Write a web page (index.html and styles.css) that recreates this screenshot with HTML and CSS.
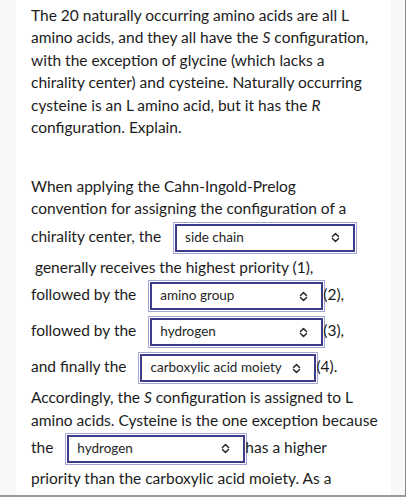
FILE: index.html
```html
<!DOCTYPE html>
<html lang="en">
<head>
<meta charset="utf-8">
<title>Amino acid configuration</title>
<link rel="stylesheet" href="styles.css">
</head>
<body>
<div class="frame">
  <main class="card">
    <p class="question">The 20 naturally occurring amino acids are all L amino acids, and they all have the <i>S</i> configuration, with the exception of glycine (which lacks a chirality center) and cysteine. Naturally occurring cysteine is an L amino acid, but it has the <i>R</i> configuration. Explain.</p>
    <p class="answer">When applying the Cahn-Ingold-Prelog<br>convention for assigning the configuration of a chirality center, the <span class="sel sel-wide"><span class="sel-text">side chain</span><svg class="chev" width="9" height="11" viewBox="0 0 9 11"><path d="M1.5 4.5 L4.5 1.5 L7.5 4.5 M1.5 6.5 L4.5 9.5 L7.5 6.5"/></svg></span><br>&nbsp;generally receives the highest priority (1),<br>followed by the <span class="sel"><span class="sel-text">amino group</span><svg class="chev" width="9" height="11" viewBox="0 0 9 11"><path d="M1.5 4.5 L4.5 1.5 L7.5 4.5 M1.5 6.5 L4.5 9.5 L7.5 6.5"/></svg></span>(2),<br>followed by the <span class="sel"><span class="sel-text">hydrogen</span><svg class="chev" width="9" height="11" viewBox="0 0 9 11"><path d="M1.5 4.5 L4.5 1.5 L7.5 4.5 M1.5 6.5 L4.5 9.5 L7.5 6.5"/></svg></span>(3),<br>and finally the <span class="sel sel-mid"><span class="sel-text">carboxylic acid moiety</span><svg class="chev" width="9" height="11" viewBox="0 0 9 11"><path d="M1.5 4.5 L4.5 1.5 L7.5 4.5 M1.5 6.5 L4.5 9.5 L7.5 6.5"/></svg></span>(4).<br>Accordingly, the <i>S</i> configuration is assigned to L amino acids. Cysteine is the one exception because<br>the <span class="sel sel-last"><span class="sel-text">hydrogen</span><svg class="chev" width="9" height="11" viewBox="0 0 9 11"><path d="M1.5 4.5 L4.5 1.5 L7.5 4.5 M1.5 6.5 L4.5 9.5 L7.5 6.5"/></svg></span>has a higher priority than the carboxylic acid moiety. As a<br>result, the <i>R</i> configuration is assigned.</p>
  </main>
</div>
</body>
</html>
```
FILE: styles.css
```css
html, body {
  margin: 0;
  padding: 0;
}

body {
  background: #f7f7f7;
  font-family: Lato, "Noto Sans", sans-serif;
}

.frame {
  height: 497px;
  box-sizing: border-box;
  border-right: 1px solid #888;
  border-bottom: 2px solid #9a9a9a;
  overflow: hidden;
  padding: 0 14px 0 16px;
}

.card {
  display: block;
  background: #fff;
  height: 100%;
  box-sizing: border-box;
  padding: 4px 12px 0 15px;
}

p {
  margin: 0;
  font-size: 15.5px;
  line-height: 22.4px;
  color: #1c1c1c;
}

.answer {
  margin-top: 36.5px;
}

.sel {
  display: inline-flex;
  align-items: center;
  justify-content: space-between;
  box-sizing: border-box;
  width: 173px;
  height: 28px;
  margin: 4px 0 4px 10px;
  padding: 0 13px 0 8px;
  border: 2px solid #3c3c8c;
  outline: 1px solid #a3a3d6;
  outline-offset: 1px;
  vertical-align: middle;
  background: #fff;
  font-size: 13.5px;
  line-height: 1;
  color: #262626;
}

.sel-wide {
  width: 180px;
}

.sel-mid {
  width: 176px;
}

.sel-last {
  width: 178px;
}

.chev {
  flex: none;
}

.chev path {
  fill: none;
  stroke: #2a2a2a;
  stroke-width: 1.5;
  stroke-linecap: round;
  stroke-linejoin: round;
}
```
